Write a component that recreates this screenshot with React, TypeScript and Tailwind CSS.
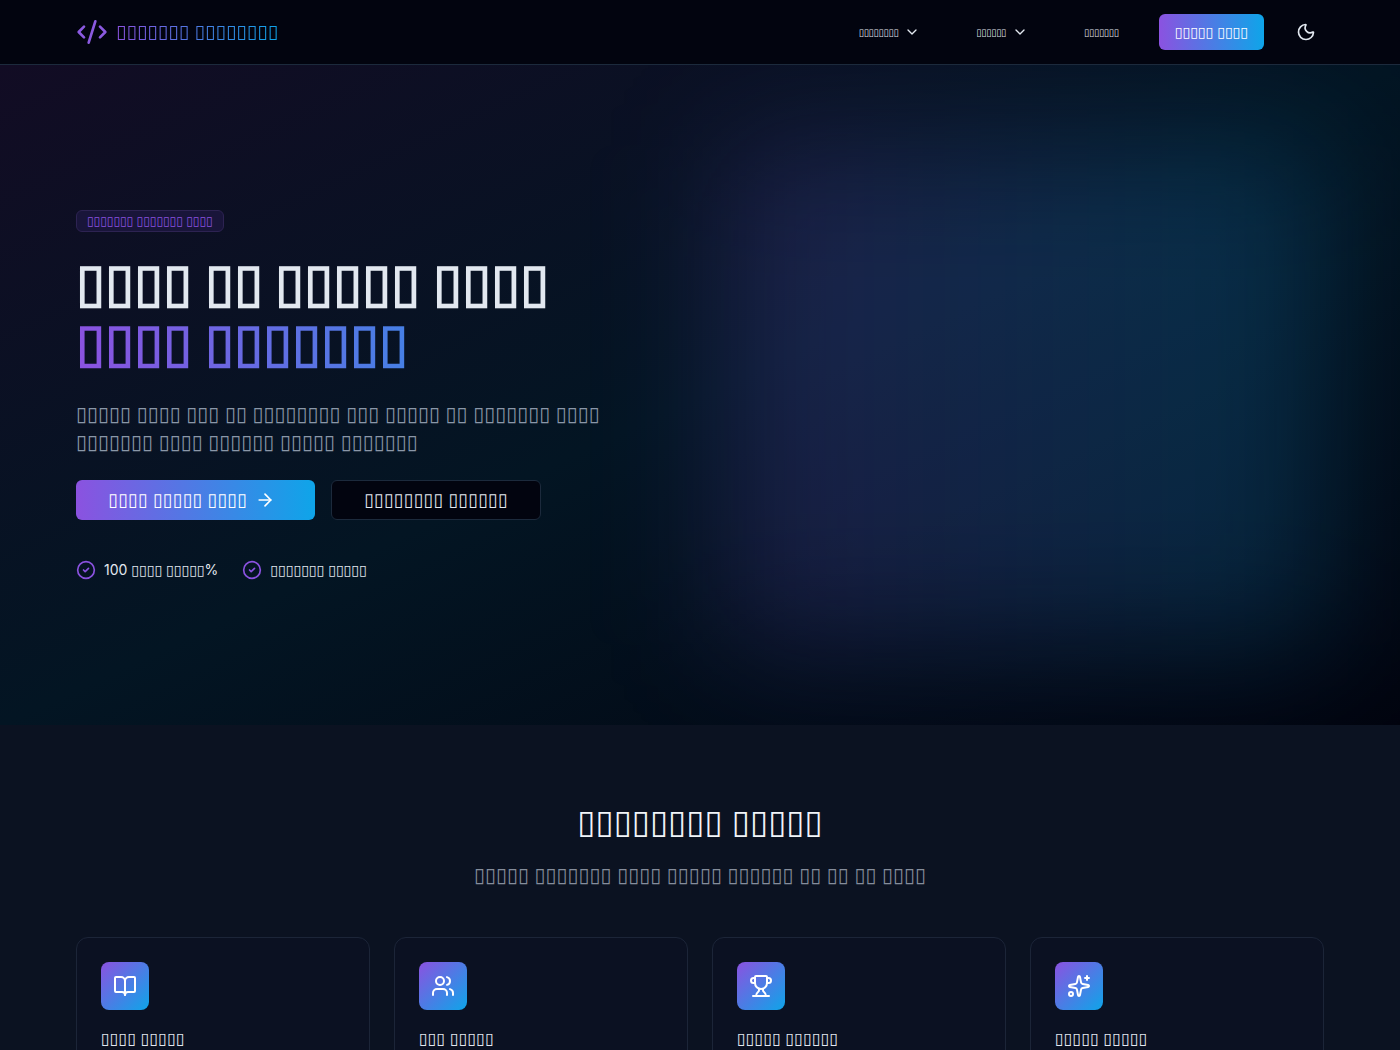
import { ArrowRight, BookOpen, ChevronDown, CircleCheck, CodeXml, LucideIcon, Moon, Sparkles, Trophy, Users } from "lucide-react";

type FeatureCardProps = {
  icon: LucideIcon;
  title: string;
}

const features: FeatureCardProps[] = [
  { icon: BookOpen, title: "▯▯▯▯ ▯▯▯▯▯" },
  { icon: Users, title: "▯▯▯ ▯▯▯▯▯" },
  { icon: Trophy, title: "▯▯▯▯▯ ▯▯▯▯▯▯" },
  { icon: Sparkles, title: "▯▯▯▯▯ ▯▯▯▯▯" },
]

function Navbar() {
  return (
    <header className="border-b border-[#1c2a3c] bg-[#02040f]">
      <div className="mx-auto flex h-16 max-w-7xl items-center justify-between px-4">
        <a href="#" className="flex items-center gap-2">
          <CodeXml className="size-8 text-[#8b5ae0]" />
          <span className="bg-linear-to-r/srgb from-[#8b52e0] to-[#0ea5e9] bg-clip-text text-[19px] leading-7 text-transparent">▯▯▯▯▯▯▯ ▯▯▯▯▯▯▯▯</span>
        </a>
        <nav className="flex items-center gap-6">
          <button className="flex items-center gap-1.5 px-4 text-slate-200">
            <span className="font-['DejaVu_Sans_Condensed'] text-[10px]">▯▯▯▯▯▯▯▯</span>
            <ChevronDown className="size-4" />
          </button>
          <button className="flex items-center gap-1.5 px-4 text-slate-200">
            <span className="font-['DejaVu_Sans_Condensed'] text-[10px]">▯▯▯▯▯▯</span>
            <ChevronDown className="size-4" />
          </button>
          <a href="#" className="px-4 font-['DejaVu_Sans_Condensed'] text-[10px] text-slate-200">▯▯▯▯▯▯▯</a>
          <button className="h-9 rounded-md bg-linear-to-r/srgb from-[#8b52e0] to-[#0ea5e9] px-4 text-sm text-white">▯▯▯▯▯ ▯▯▯▯</button>
          <button aria-label="▯▯▯▯" className="flex size-9 items-center justify-center text-slate-200">
            <Moon className="size-5" />
          </button>
        </nav>
      </div>
    </header>
  )
}

function Hero() {
  return (
    <section className="overflow-hidden bg-linear-to-br/srgb from-[#120c24] via-[#031523] to-[#02040f] py-20">
      <div className="mx-auto grid max-w-7xl grid-cols-2 items-center gap-12 px-4">
        <div className="flex flex-col items-start">
          <span className="mb-5 rounded-md border border-[#2d2352] bg-[#19153a] px-2.5 py-0.5 text-xs text-[#8b52e0]">▯▯▯▯▯▯▯ ▯▯▯▯▯▯▯ ▯▯▯▯</span>
          <h1 className="mb-7 w-full font-['Inter'] text-[53px] leading-[60px] font-bold text-slate-200">
            ▯▯▯▯ ▯▯ ▯▯▯▯▯ ▯▯▯▯
            <span className="block bg-linear-to-r/srgb from-[#8b52e0] to-[#0ea5e9] bg-clip-text text-transparent">▯▯▯▯ ▯▯▯▯▯▯▯</span>
          </h1>
          <p className="mb-6 text-xl leading-7 text-[#8a97a8]">
            ▯▯▯▯▯ ▯▯▯▯ ▯▯▯ ▯▯ ▯▯▯▯▯▯▯▯ ▯▯▯ ▯▯▯▯▯ ▯▯ ▯▯▯▯▯▯▯ ▯▯▯▯ ▯▯▯▯▯▯▯ ▯▯▯▯ ▯▯▯▯▯▯ ▯▯▯▯▯ ▯▯▯▯▯▯▯
          </p>
          <div className="mb-10 flex gap-4">
            <button className="flex h-10 items-center rounded-md bg-linear-to-r/srgb from-[#8b52e0] to-[#0ea5e9] px-8 text-lg text-white">
              ▯▯▯▯ ▯▯▯▯▯ ▯▯▯▯
              <ArrowRight className="mx-2 size-5" />
            </button>
            <button className="h-10 rounded-md border border-[#1c2a3c] bg-[#02040f] px-8 text-lg text-slate-200">▯▯▯▯▯▯▯▯ ▯▯▯▯▯▯</button>
          </div>
          <ul className="flex gap-6 text-sm text-slate-200">
            <li className="flex items-center gap-2">
              <CircleCheck className="size-5 text-[#8b52e0]" />
              100 ▯▯▯▯ ▯▯▯▯▯%
            </li>
            <li className="flex items-center gap-2">
              <CircleCheck className="size-5 text-[#8b52e0]" />
              ▯▯▯▯▯▯▯ ▯▯▯▯▯
            </li>
          </ul>
        </div>
        <div className="h-[500px] rounded-3xl bg-linear-to-r/srgb from-[#7c52e0]/20 to-[#0ea5e9]/20 blur-3xl" />
      </div>
    </section>
  )
}

function FeatureCard({ icon: Icon, title }: FeatureCardProps) {
  return (
    <div className="rounded-xl border border-[#1c2538] bg-[#0b1122] p-6">
      <div className="mb-4 flex size-12 items-center justify-center rounded-lg bg-linear-to-br/srgb from-[#8b52e0] to-[#0ea5e9]">
        <Icon className="size-6 text-white" />
      </div>
      <h3 className="text-base leading-6 text-slate-200">{title}</h3>
    </div>
  )
}

export default function App() {
  return (
    <div className="h-screen overflow-hidden bg-[#02040f] font-['Inter','DejaVu_Sans',sans-serif]">
      <Navbar />
      <Hero />
      <section className="bg-[#0b1221] py-20">
        <div className="mx-auto max-w-7xl px-4">
          <div className="mb-12 text-center">
            <h2 className="mb-6 text-[33px] leading-8 text-slate-100">▯▯▯▯▯▯▯▯ ▯▯▯▯▯</h2>
            <p className="text-xl leading-7 text-[#858d9b]">▯▯▯▯▯ ▯▯▯▯▯▯▯ ▯▯▯▯ ▯▯▯▯▯ ▯▯▯▯▯▯ ▯▯ ▯▯ ▯▯ ▯▯▯▯</p>
          </div>
          <div className="grid grid-cols-4 gap-6">
            {features.map((feature, i) => <FeatureCard key={i} {...feature} />)}
          </div>
        </div>
      </section>
    </div>
  )
}
